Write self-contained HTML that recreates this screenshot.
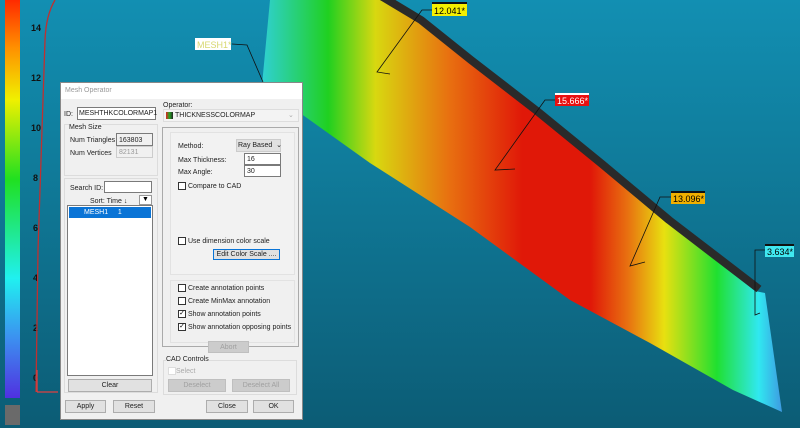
<!DOCTYPE html>
<html><head><meta charset="utf-8"><style>
*{margin:0;padding:0;box-sizing:border-box}
body{width:800px;height:428px;overflow:hidden;position:relative;font-family:"Liberation Sans",sans-serif;background:#10789a}
svg.bg{position:absolute;left:0;top:0}
.a{position:absolute;font-size:7px;color:#222;white-space:nowrap;line-height:1}
.box{position:absolute;background:#fff;border:1px solid #7a7a7a}
.grp{position:absolute;border:1px solid #dcdcdc}
.btn{position:absolute;background:#e1e1e1;border:1px solid #adadad;font-size:7px;color:#222;text-align:center;line-height:11px}
.dis{color:#a0a0a0;background:#ccc;border-color:#bfbfbf}
.cb{position:absolute;width:8px;height:8px;border:1px solid #333;background:#fff;font-size:7px;line-height:6px;text-align:center}
</style></head><body>
<svg class="bg" width="800" height="428" viewBox="0 0 800 428">
<defs>
<linearGradient id="bgg" x1="0" y1="0" x2="0" y2="1"><stop offset="0" stop-color="#128fb2"/><stop offset="1" stop-color="#0c5c75"/></linearGradient>
<linearGradient id="cb" x1="0" y1="0" x2="0" y2="1"><stop offset="0" stop-color="#ff2a00"/><stop offset="0.12" stop-color="#ff9000"/><stop offset="0.25" stop-color="#f0f000"/><stop offset="0.45" stop-color="#20e020"/><stop offset="0.7" stop-color="#20f0f0"/><stop offset="0.85" stop-color="#3c90f0"/><stop offset="1" stop-color="#5030e0"/></linearGradient>
<linearGradient id="mg" x1="260" y1="0" x2="785" y2="0" gradientUnits="userSpaceOnUse"><stop offset="0" stop-color="#30d0d8"/><stop offset="0.13" stop-color="#20d020"/><stop offset="0.22" stop-color="#d8d810"/><stop offset="0.36" stop-color="#e87010"/><stop offset="0.5" stop-color="#e01808"/><stop offset="0.63" stop-color="#e01808"/><stop offset="0.7" stop-color="#e87010"/><stop offset="0.77" stop-color="#e8e010"/><stop offset="0.87" stop-color="#20e030"/><stop offset="0.95" stop-color="#30e8f0"/><stop offset="1" stop-color="#4090e0"/></linearGradient>
</defs>
<rect width="800" height="428" fill="url(#bgg)"/>
<rect x="5" y="0" width="15" height="398" fill="url(#cb)"/>
<rect x="5" y="405" width="15" height="20" fill="#6a6a6a"/>
<g font-size="9" font-weight="bold" fill="#111">
<text x="31" y="31">14</text><text x="31" y="81">12</text><text x="31" y="131">10</text><text x="33" y="181">8</text><text x="33" y="231">6</text><text x="33" y="281">4</text><text x="33" y="331">2</text><text x="33" y="381">0</text></g>
<path d="M55 0 Q46 15 45 40 L38 250 L36 392" stroke="#c03030" stroke-width="1.3" fill="none"/>
<path d="M37 392 L37 370 M37 392 L58 392" stroke="#e04040" stroke-width="1.3"/>
<path d="M270 0 L262 85 L300 113 L370 163 L470 227 L570 300 L650 343 L733 390 L782 412 L765 293 L755 291 L672 224 L605 168 L540 115 L475 64 L425 24 L393 0 Z" fill="url(#mg)"/>
<polyline points="381,-4 421,20 471,60 537,111 602,164 669,220 759,289" stroke="#2a2a2a" stroke-width="8" fill="none" stroke-linejoin="round"/>
<g stroke="#111" stroke-width="0.8" fill="none">
<path d="M232 44 L247 45 L263 82"/><path d="M432 10 L422 10 L377 72 L390 74"/>
<path d="M555 100 L545 100 L495 170 L515 169"/><path d="M671 197 L660 197 L630 266 L645 262"/>
<path d="M765 250 L755 250 L755 315 L760 313"/></g>
<g font-size="9">
<rect x="195" y="38" width="36" height="12" fill="#fff"/><text x="197" y="48" fill="#d8d870">MESH1*</text>
<rect x="432" y="3" width="35" height="13" fill="#f4f000"/><rect x="432" y="2" width="35" height="2" fill="#111"/><text x="434" y="14">12.041*</text>
<rect x="555" y="94" width="34" height="12" fill="#e81010"/><rect x="555" y="93" width="34" height="2" fill="#fff"/><text x="557" y="104" fill="#fff">15.666*</text>
<rect x="671" y="192" width="34" height="12" fill="#f0b000"/><rect x="671" y="191" width="34" height="2" fill="#111"/><text x="673" y="202">13.096*</text>
<rect x="765" y="245" width="29" height="12" fill="#40e8f0"/><rect x="765" y="244" width="29" height="2" fill="#111"/><text x="767" y="255">3.634*</text>
</g>
</svg>

<div style="position:absolute;left:60px;top:82px;width:243px;height:338px;background:#f0f0f0;border:1px solid #888">
<div style="position:absolute;left:0;top:0;right:0;height:16px;background:#fff"></div>
</div>
<div class="a" style="left:65px;top:87px;color:#999">Mesh Operator</div>
<div class="a" style="left:64px;top:111px">ID:</div>
<div class="box" style="left:77px;top:107px;width:79px;height:13px"></div>
<div class="a" style="left:79px;top:110px">MESHTHKCOLORMAP1</div>
<div class="grp" style="left:64px;top:124px;width:94px;height:52px"></div>
<div class="a" style="left:69px;top:124px;background:#f0f0f0">Mesh Size</div>
<div class="a" style="left:70px;top:137px">Num Triangles</div>
<div class="box" style="left:116px;top:133px;width:37px;height:13px;background:#f0f0f0"></div>
<div class="a" style="left:119px;top:137px">163803</div>
<div class="a" style="left:70px;top:150px">Num Vertices</div>
<div class="box" style="left:116px;top:146px;width:37px;height:12px;background:#f0f0f0;border-color:#ccc"></div>
<div class="a" style="left:119px;top:149px;color:#999">82131</div>
<div class="grp" style="left:64px;top:178px;width:94px;height:215px"></div>
<div class="a" style="left:70px;top:185px">Search ID:</div>
<div class="box" style="left:104px;top:181px;width:48px;height:12px"></div>
<div class="a" style="left:90px;top:198px">Sort: Time ↓</div>
<div class="box" style="left:139px;top:195px;width:13px;height:10px;border-color:#999;font-size:7px;line-height:8px;text-align:center">▼</div>
<div class="box" style="left:67px;top:205px;width:86px;height:171px"></div>
<div style="position:absolute;left:69px;top:207px;width:82px;height:11px;background:#0a74d6"></div>
<div class="a" style="left:84px;top:209px;color:#fff">MESH1 &nbsp;&nbsp;&nbsp;&nbsp;1</div>
<div class="btn" style="left:68px;top:379px;width:84px;height:13px">Clear</div>

<div class="a" style="left:163px;top:102px">Operator:</div>
<div class="box" style="left:163px;top:109px;width:136px;height:13px;border-color:#ddd;background:#f3f3f3"></div>
<div style="position:absolute;left:166px;top:112px;width:7px;height:7px;background:linear-gradient(90deg,#d22,#2a2,#222)"></div>
<div class="a" style="left:175px;top:112px">THICKNESSCOLORMAP</div>
<div class="a" style="left:288px;top:112px;color:#aaa">⌄</div>
<div class="grp" style="left:162px;top:127px;width:137px;height:220px;border-color:#aaa"></div>
<div class="grp" style="left:170px;top:132px;width:125px;height:143px;background:#f2f2f2;border-color:#e2e2e2"></div>
<div class="a" style="left:178px;top:143px">Method:</div>
<div class="box" style="left:236px;top:139px;width:45px;height:13px;background:#e1e1e1;border-color:#ccc"></div>
<div class="a" style="left:238px;top:142px">Ray Based &nbsp;⌄</div>
<div class="a" style="left:178px;top:157px">Max Thickness:</div>
<div class="box" style="left:244px;top:153px;width:37px;height:12px"></div><div class="a" style="left:247px;top:156px">16</div>
<div class="a" style="left:178px;top:169px">Max Angle:</div>
<div class="box" style="left:244px;top:165px;width:37px;height:12px"></div><div class="a" style="left:247px;top:168px">30</div>
<div class="cb" style="left:178px;top:182px"></div><div class="a" style="left:188px;top:183px">Compare to CAD</div>
<div class="cb" style="left:178px;top:237px"></div><div class="a" style="left:188px;top:238px">Use dimension color scale</div>
<div class="btn" style="left:213px;top:249px;width:67px;height:11px;border-color:#0a74d6;line-height:9px">Edit Color Scale ....</div>
<div class="grp" style="left:170px;top:280px;width:125px;height:63px;border-color:#e2e2e2"></div>
<div class="cb" style="left:178px;top:284px"></div><div class="a" style="left:188px;top:285px">Create annotation points</div>
<div class="cb" style="left:178px;top:297px"></div><div class="a" style="left:188px;top:298px">Create MinMax annotation</div>
<div class="cb" style="left:178px;top:310px">✓</div><div class="a" style="left:188px;top:311px">Show annotation points</div>
<div class="cb" style="left:178px;top:323px">✓</div><div class="a" style="left:188px;top:324px">Show annotation opposing points</div>
<div class="btn dis" style="left:208px;top:341px;width:41px;height:12px">Abort</div>
<div class="grp" style="left:163px;top:360px;width:134px;height:35px"></div>
<div class="a" style="left:166px;top:356px;background:#f0f0f0">CAD Controls</div>
<div class="cb" style="left:168px;top:367px;border-color:#ddd"></div><div class="a" style="left:176px;top:368px;color:#aaa">Select</div>
<div class="btn dis" style="left:168px;top:379px;width:58px;height:13px">Deselect</div>
<div class="btn dis" style="left:232px;top:379px;width:58px;height:13px">Deselect All</div>
<div class="btn" style="left:65px;top:400px;width:41px;height:13px">Apply</div>
<div class="btn" style="left:113px;top:400px;width:42px;height:13px">Reset</div>
<div class="btn" style="left:206px;top:400px;width:42px;height:13px">Close</div>
<div class="btn" style="left:253px;top:400px;width:41px;height:13px">OK</div>
</body></html>
